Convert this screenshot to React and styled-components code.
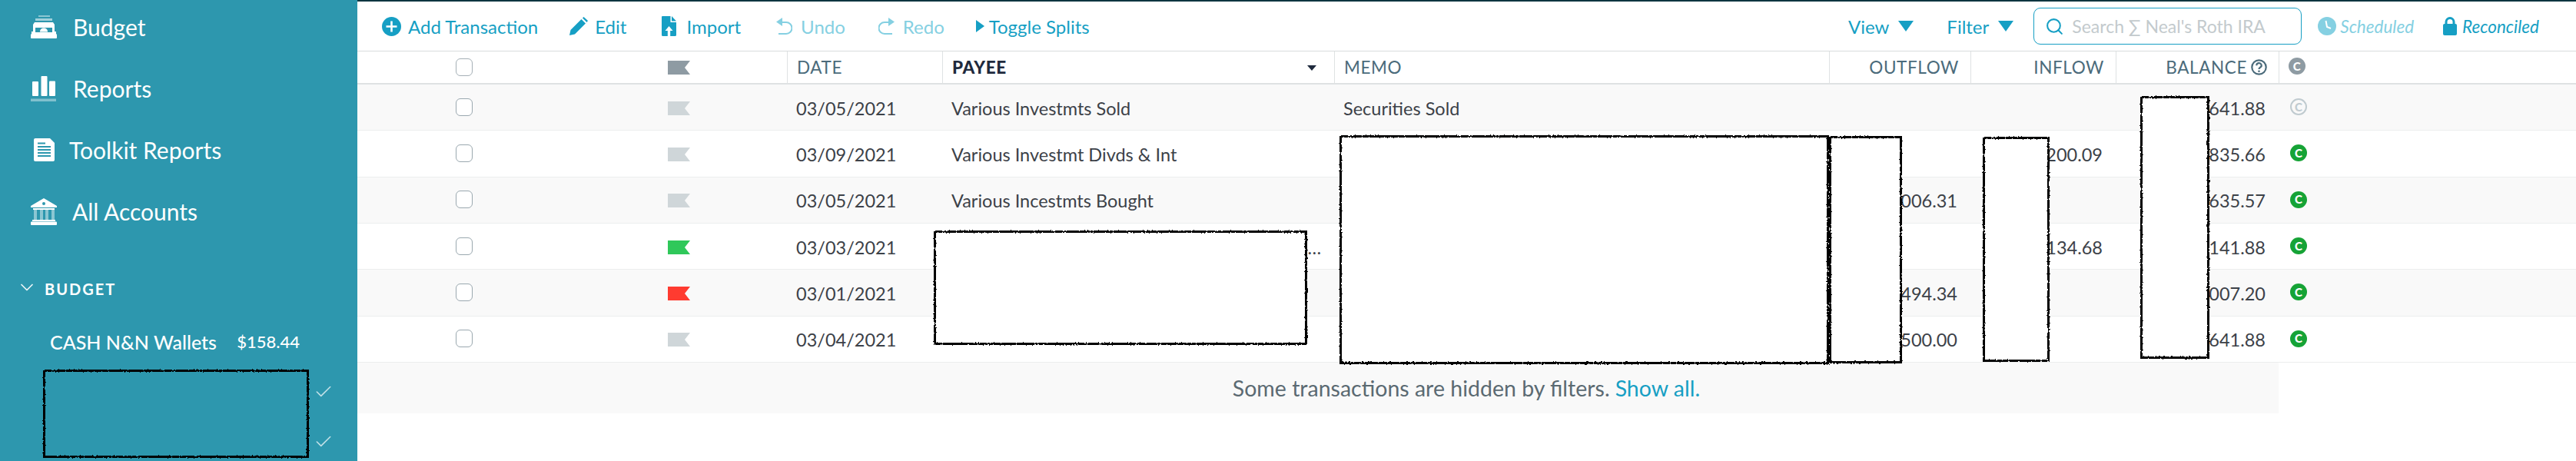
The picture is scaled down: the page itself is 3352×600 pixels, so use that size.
import React from 'react'
import styled, {createGlobalStyle, css} from 'styled-components'
import {ChevronDown, Check, Search} from 'lucide-react'

const Global = createGlobalStyle`
html, body {
  margin: 0;
  padding: 0;
  background: #fff;
}
body {
  font-family: Lato, 'Liberation Sans', sans-serif;
  overflow: hidden;
}
`

const link = '#169fc4'
const faded = '#85d0e2'

const Page = styled.div`
position: relative;
display: flex;
width: 3352px;
height: 600px;
overflow: hidden;
`

/* sidebar */
const Sidebar = styled.aside`
width: 465px;
flex: none;
background: #2d97ae;
color: #fff;
`
const Nav = styled.nav`
margin-top: -5px;
`
const NavItem = styled.div`
display: flex;
align-items: center;
height: 80px;
font-size: 30px;
`
const NavIcon = styled.span`
display: flex;
justify-content: center;
width: 34px;
margin-left: 40px;
margin-right: ${({$gap}) => $gap}px;
`
const GroupTitle = styled.div`
display: flex;
align-items: center;
margin-top: 43px;
height: 36px;
padding-left: 21px;
font-size: 20px;
font-weight: 700;
letter-spacing: 2px;
svg { margin-right: 9px; margin-top: -5px; opacity: .9; }
`
const AccountRow = styled.div`
display: flex;
align-items: center;
justify-content: space-between;
height: 65px;
padding-left: 65px;
width: 325px;
margin-top: 18px;
font-size: 25px;
font-weight: 500;
`
const AccountAmount = styled.span`
font-size: 22px;
`
const Tick = styled.div`
height: 65px;
padding-left: 408px;
display: flex;
align-items: center;
color: #fff;
svg { opacity: .7; }
`

/* main */
const Main = styled.main`
flex: 1;
min-width: 0;
border-top: 2px solid #0d3540;
`
const Toolbar = styled.div`
display: flex;
align-items: center;
height: 65px;
padding: 0 48px 0 32px;
box-sizing: border-box;
border-bottom: 1px solid #d9dcdd;
font-size: 24px;
color: ${link};
`
const Tool = styled.span`
display: flex;
align-items: center;
gap: ${({$gap}) => $gap || 9}px;
margin-right: ${({$space}) => $space}px;
color: ${({$off}) => $off ? faded : link};
font-style: ${({$italic}) => $italic ? 'italic' : 'normal'};
font-size: ${({$italic}) => $italic ? 22.5 : 24}px;
white-space: nowrap;
`
const ToolSpacer = styled.div`
flex: 1;
`
const SearchBox = styled.div`
display: flex;
align-items: center;
gap: 10px;
box-sizing: border-box;
width: 349px;
height: 48px;
margin-right: 21px;
padding-left: 14px;
border: 1px solid ${link};
border-radius: 9px;
color: #c3cacd;
font-size: 23px;
white-space: nowrap;
svg { color: ${link}; }
`

const columns = css`
display: grid;
grid-template-columns: 278px 281px 202px 510px 644px 184px 189px 212px 1fr;
`
const HeadRow = styled.div`
${columns}
height: 43px;
box-sizing: border-box;
border-bottom: 2px solid #dfe2e3;
color: #4b6b7b;
font-size: 22.5px;
letter-spacing: .6px;
`
const HeadCell = styled.div`
position: relative;
display: flex;
align-items: center;
justify-content: ${({$align}) => $align || 'flex-start'};
gap: 5px;
padding: ${({$align}) => $align === 'flex-end' ? '0 15px 0 0' : $align === 'center' ? '0' : '0 0 0 12px'};
box-sizing: border-box;
font-weight: ${({$active}) => $active ? 900 : 400};
color: ${({$active}) => $active ? '#1f2a3d' : 'inherit'};
border-left: ${({$rule}) => $rule ? '1px solid #dfe2e3' : 'none'};
`
const SortMark = styled.span`
position: absolute;
right: 23px;
top: 18px;
border-left: 6px solid transparent;
border-right: 6px solid transparent;
border-top: 7px solid #1f2a3d;
`
const Row = styled.div`
${columns}
height: 60.33px;
box-sizing: border-box;
border-bottom: 1px solid #eceeee;
background: ${({$striped}) => $striped ? '#f9f9f9' : '#fff'};
color: #3c4148;
font-size: 23.5px;
`
const Cell = styled.div`
display: flex;
align-items: center;
justify-content: ${({$align}) => $align || 'flex-start'};
padding: ${({$align}) => $align === 'flex-end' ? '2px 17px 0 0' : $align === 'center' ? '2px 0 0' : '2px 0 0 12px'};
box-sizing: border-box;
white-space: nowrap;
`
const CheckBox = styled.span`
display: block;
width: 22px;
height: 23px;
box-sizing: border-box;
border: 1.5px solid ${({$dark}) => $dark ? '#a5b0b6' : '#9aa8af'};
border-radius: 6px;
background: #fff;
margin-top: ${({$dark}) => $dark ? -1 : -3}px;
`
const Flag = styled.svg`
display: block;
width: 29px;
height: 18px;
`
const ClearCell = styled(Cell)`
padding-left: 15px;
`
const ClearedDot = styled.span`
display: flex;
align-items: center;
justify-content: center;
width: 22px;
height: 22px;
margin-top: -3px;
box-sizing: border-box;
border-radius: 50%;
font-size: 15px;
font-weight: 900;
line-height: 1;
background: ${({$kind}) => $kind === 'on' ? '#16a336' : $kind === 'head' ? '#8e9ba3' : 'transparent'};
color: ${({$kind}) => $kind === 'off' ? '#c0cbd0' : '#fff'};
border: ${({$kind}) => $kind === 'off' ? '2px solid #c0cbd0' : 'none'};
`
const Notice = styled.div`
width: 2500px;
height: 66px;
box-sizing: border-box;
padding-left: 386px;
display: flex;
align-items: center;
justify-content: center;
background: #f9f9f9;
color: #5b6a72;
font-size: 28.500px;
gap: 7px;
a { color: ${link}; }
`

/* scribbled out by hand over the screenshot */
const Scribble = styled.div`
position: absolute;
left: ${({$x}) => $x}px;
top: ${({$y}) => $y}px;
width: ${({$w}) => $w}px;
height: ${({$h}) => $h}px;
box-sizing: border-box;
border: 3px solid #000;
background: ${({$open}) => $open ? 'transparent' : '#fff'};
filter: url(#rough);
`

const AddIcon = () => (
  <svg width="25" height="25" viewBox="0 0 25 25">
    <circle cx="12.5" cy="12.5" r="12.5" fill={link} />
    <path d="M12.5 5.5v14M5.5 12.5h14" stroke="#fff" strokeWidth="2.6" />
  </svg>
)
const PencilIcon = () => (
  <svg width="24" height="24" viewBox="0 0 24 24">
    <path d="M0 24l1.500-7L15.500 3l5.500 5.500L7 22.500z" fill={link} />
    <path d="M17 1.500l1.500-1.500L24 5l-1.500 2z" fill={link} />
  </svg>
)
const ImportIcon = () => (
  <svg width="19" height="26" viewBox="0 0 19 26">
    <path fillRule="evenodd" fill={link} d="M1 0h10.500v8H19v16.500a1.500 1.500 0 0 1-1.500 1.500H1.500A1.500 1.500 0 0 1 0 24.500V1a1 1 0 0 1 1-1zM9.500 13L4.500 19h3.300v7h3.400v-7h3.300z" />
    <path d="M13 0l6 6.500h-6z" fill={link} />
  </svg>
)
const UndoIcon = ({flip}) => (
  <svg width="21" height="24" viewBox="0 0 21 24" style={flip ? {transform: 'scaleX(-1)'} : undefined}>
    <path d="M8 7h5a6.500 6.500 0 0 1 0 15H3" fill="none" stroke={faded} strokeWidth="2" />
    <path d="M8 1v11L0 6.500z" fill={faded} />
  </svg>
)
const Triangle = ({w, h}) => (
  <svg width={w} height={h} viewBox="0 0 20 14">
    <path d="M0 0h20L10 14z" fill={link} />
  </svg>
)
const PlayIcon = () => (
  <svg width="11" height="16" viewBox="0 0 11 16">
    <path d="M0 0l11 8-11 8z" fill={link} />
  </svg>
)
const ClockIcon = () => (
  <svg width="24" height="24" viewBox="0 0 24 24">
    <circle cx="12" cy="12" r="12" fill={faded} />
    <path d="M10.500 5l1.500 8 5 2" fill="none" stroke="#fff" strokeWidth="2" />
  </svg>
)
const LockIcon = () => (
  <svg width="18" height="24" viewBox="0 0 18 24">
    <path d="M4 10V6.500a5 5 0 0 1 10 0V10" fill="none" stroke={link} strokeWidth="3" />
    <rect y="9" width="18" height="15" rx="2" fill={link} />
  </svg>
)
const HelpIcon = () => (
  <svg width="21" height="21" viewBox="0 0 21 21">
    <circle cx="10.500" cy="10.500" r="9.200" fill="none" stroke="#4b6b7b" strokeWidth="2.200" />
    <path d="M7.300 8.200a3.200 3 0 1 1 4.700 2.600c-1 .6-1.500 1.100-1.500 2.300" fill="none" stroke="#4b6b7b" strokeWidth="2.200" />
    <circle cx="10.500" cy="15.700" r="1.300" fill="#4b6b7b" />
  </svg>
)
const BudgetIcon = () => (
  <svg width="34" height="30" viewBox="0 0 34 30" fill="#fff">
    <rect x="10" width="15" height="2" opacity=".45" />
    <rect x="6" y="4" width="22" height="3" opacity=".55" />
    <path fillRule="evenodd" d="M5 9h24l2 3v9h2v4H1v-4h2v-9zM6 16v6h22v-6z" />
    <path d="M0 24.500h34V29a1 1 0 0 1-1 1H1a1 1 0 0 1-1-1z" />
    <path d="M12 21.500c0-3.500 2-5 5-5s5 1.500 5 5z" />
  </svg>
)
const ReportsIcon = () => (
  <svg width="34" height="33" viewBox="0 0 34 33" fill="#fff">
    <rect x="2" y="7" width="8" height="19" rx="1" />
    <rect x="13.500" width="8" height="26" rx="1" />
    <rect x="24" y="6.500" width="8" height="19.500" rx="1" />
    <rect y="29.500" width="33" height="3.500" opacity=".4" />
  </svg>
)
const ToolkitIcon = () => (
  <svg width="27" height="30" viewBox="0 0 27 30">
    <path d="M2 0h19l6 6v22a2 2 0 0 1-2 2H2a2 2 0 0 1-2-2V2a2 2 0 0 1 2-2z" fill="#fff" />
    <path d="M5 6.500h10M5 11h17M5 15h17M5 19h17M5 23h17" stroke="#2d97ae" strokeWidth="2" />
  </svg>
)
const BankIcon = () => (
  <svg width="34" height="35" viewBox="0 0 34 35" fill="#fff">
    <path fillRule="evenodd" d="M17 0l17 10v2H0v-2zM17 5a2 2 0 1 0 0 4 2 2 0 0 0 0-4z" />
    <rect x="3" y="13" width="28" height="2" />
    <rect x="4" y="15" width="4" height="14" opacity=".45" />
    <rect x="12" y="15" width="4" height="14" opacity=".45" />
    <rect x="19" y="15" width="4" height="14" opacity=".45" />
    <rect x="27" y="15" width="4" height="14" opacity=".45" />
    <rect x="2" y="28" width="30" height="2" />
    <rect y="30.500" width="34" height="4.500" rx="1" />
  </svg>
)

const flagColours = {none: '#cfd6d9', green: '#2fc85a', red: '#ff3b30', head: '#8e9ba3'}
const FlagMark = ({kind}) => (
  <Flag viewBox="0 0 29 18">
    <path d="M0 0h29l-7 9 7 9H0z" fill={flagColours[kind]} />
  </Flag>
)

const rows = [
  {date: '03/05/2021', payee: 'Various Investmts Sold', memo: 'Securities Sold', balance: '641.88', flag: 'none', cleared: 'off'},
  {date: '03/09/2021', payee: 'Various Investmt Divds & Int', inflow: '200.09', balance: '835.66', flag: 'none', cleared: 'on'},
  {date: '03/05/2021', payee: 'Various Incestmts Bought', outflow: '006.31', balance: '635.57', flag: 'none', cleared: 'on'},
  {date: '03/03/2021', more: true, inflow: '134.68', balance: '141.88', flag: 'green', cleared: 'on'},
  {date: '03/01/2021', outflow: '494.34', balance: '007.20', flag: 'red', cleared: 'on'},
  {date: '03/04/2021', outflow: '500.00', balance: '641.88', flag: 'none', cleared: 'on'},
]

const scribbles = [
  {x: 1215, y: 300, w: 486, h: 149},
  {x: 1743, y: 176, w: 637, h: 298},
  {x: 2380, y: 177, w: 95, h: 296},
  {x: 2580, y: 178, w: 87, h: 293},
  {x: 2785, y: 125, w: 90, h: 342},
  {x: 56, y: 481, w: 346, h: 115, open: true},
]

export default function App() {
  return (
    <Page>
      <Global />
      <svg width="0" height="0" style={{position: 'absolute'}}>
        <filter id="rough" x="-2%" y="-2%" width="104%" height="104%">
          <feTurbulence type="fractalNoise" baseFrequency="0.5" numOctaves="2" seed="4" />
          <feDisplacementMap in="SourceGraphic" scale="3" />
        </filter>
      </svg>
      <Sidebar>
        <Nav>
          <NavItem><NavIcon $gap={21}><BudgetIcon /></NavIcon>Budget</NavItem>
          <NavItem><NavIcon $gap={21}><ReportsIcon /></NavIcon>Reports</NavItem>
          <NavItem><NavIcon $gap={16}><ToolkitIcon /></NavIcon>Toolkit Reports</NavItem>
          <NavItem><NavIcon $gap={20}><BankIcon /></NavIcon>All Accounts</NavItem>
        </Nav>
        <GroupTitle><ChevronDown size={28} strokeWidth={1.5} />BUDGET</GroupTitle>
        <AccountRow>CASH N&amp;N Wallets<AccountAmount>$158.44</AccountAmount></AccountRow>
        <Tick><Check size={26} strokeWidth={1.5} /></Tick>
        <Tick><Check size={26} strokeWidth={1.5} /></Tick>
      </Sidebar>
      <Main>
        <Toolbar>
          <Tool $space={41}><AddIcon />Add Transaction</Tool>
          <Tool $space={46}><PencilIcon />Edit</Tool>
          <Tool $space={46} $gap={13}><ImportIcon />Import</Tool>
          <Tool $space={43} $off $gap={11}><UndoIcon />Undo</Tool>
          <Tool $space={41} $off $gap={11}><UndoIcon flip />Redo</Tool>
          <Tool $gap={6}><PlayIcon />Toggle Splits</Tool>
          <ToolSpacer />
          <Tool $space={43} $gap={12}>View<Triangle w={20} h={14} /></Tool>
          <Tool $space={26} $gap={12}>Filter<Triangle w={20} h={14} /></Tool>
          <SearchBox><Search size={25} strokeWidth={2} />Search ∑ Neal's Roth IRA</SearchBox>
          <Tool $space={38} $off $italic $gap={5}><ClockIcon />Scheduled</Tool>
          <Tool $italic $gap={7}><LockIcon />Reconciled</Tool>
        </Toolbar>
        <HeadRow>
          <HeadCell $align="center"><CheckBox $dark /></HeadCell>
          <HeadCell $align="center"><FlagMark kind="head" /></HeadCell>
          <HeadCell $rule>DATE</HeadCell>
          <HeadCell $rule $active>PAYEE<SortMark /></HeadCell>
          <HeadCell $rule>MEMO</HeadCell>
          <HeadCell $rule $align="flex-end">OUTFLOW</HeadCell>
          <HeadCell $rule $align="flex-end">INFLOW</HeadCell>
          <HeadCell $rule $align="flex-end">BALANCE<HelpIcon /></HeadCell>
          <HeadCell $rule><ClearedDot $kind="head">C</ClearedDot></HeadCell>
        </HeadRow>
        {rows.map((row, i) => (
          <Row key={i} $striped={i % 2 === 0}>
            <Cell $align="center"><CheckBox /></Cell>
            <Cell $align="center"><FlagMark kind={row.flag} /></Cell>
            <Cell>{row.date}</Cell>
            <Cell $align={row.more ? 'flex-end' : undefined}>{row.more ? '…' : row.payee}</Cell>
            <Cell>{row.memo}</Cell>
            <Cell $align="flex-end">{row.outflow}</Cell>
            <Cell $align="flex-end">{row.inflow}</Cell>
            <Cell $align="flex-end">{row.balance}</Cell>
            <ClearCell><ClearedDot $kind={row.cleared}>C</ClearedDot></ClearCell>
          </Row>
        ))}
        <Notice>Some transactions are hidden by filters.<a>Show all.</a></Notice>
      </Main>
      {scribbles.map((s, i) => (
        <Scribble key={i} $x={s.x} $y={s.y} $w={s.w} $h={s.h} $open={s.open} />
      ))}
    </Page>
  )
}
